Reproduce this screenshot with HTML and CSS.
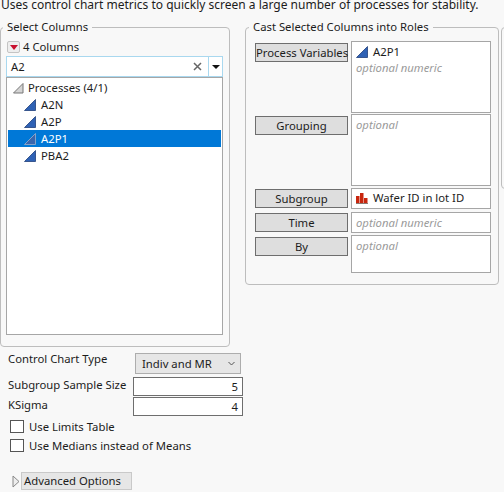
FILE: index.html
```html
<!DOCTYPE html>
<html lang="en">
  <head>
    <meta charset="UTF-8" />
    <title>Process Screening</title>
    <link rel="stylesheet" href="styles.css">
  </head>
  <body>
    <svg class="icon-defs" width="0" height="0" aria-hidden="true">
      <symbol id="continuous" viewBox="0 0 12 12">
        <path d="M11.5 .5V11.5H.5Z" fill="#2f62b5" stroke="#1f3f7a" stroke-width=".8" />
      </symbol>
    </svg>

    <p class="intro">Uses control chart metrics to quickly screen a large number of processes for stability.</p>

    <div class="main-row">
      <div class="left-col">
        <fieldset class="panel select-panel">
          <legend>Select Columns</legend>
          <div class="col-count">
            <span class="menu-btn"><span class="menu-arrow"></span></span>
            <span>4 Columns</span>
          </div>
          <div class="search-box">
            <span class="search-text">A2</span>
            <svg class="clear-x" width="9" height="9" viewBox="0 0 9 9">
              <path d="M1 1L8 8M8 1L1 8" stroke="#666" stroke-width="1.5" />
            </svg>
            <span class="search-drop"><span class="drop-arrow"></span></span>
          </div>
          <ul class="col-list">
            <li class="group-row">
              <svg class="tri" width="12" height="12" viewBox="0 0 12 12">
                <path d="M11 1.5V11H1.5Z" fill="#d4d4d4" stroke="#777" />
              </svg>
              Processes (4/1)
            </li>
            <li class="col-row"><svg class="tri" width="12" height="12"><use href="#continuous" /></svg>A2N</li>
            <li class="col-row"><svg class="tri" width="12" height="12"><use href="#continuous" /></svg>A2P</li>
            <li class="col-row selected">
              <svg class="tri" width="12" height="12" viewBox="0 0 12 12">
                <path d="M11.5 .5V11.5H.5Z" fill="#3a66ad" stroke="#9fb0c8" stroke-width=".8" />
              </svg>
              A2P1
            </li>
            <li class="col-row"><svg class="tri" width="12" height="12"><use href="#continuous" /></svg>PBA2</li>
          </ul>
        </fieldset>

        <div class="options">
          <div class="opt-row type-row">
            <span class="opt-label">Control Chart Type</span>
            <span class="combo">
              Indiv and MR
              <svg width="7" height="5" viewBox="0 0 7 5">
                <path d="M.5 1L3.5 4L6.5 1" fill="none" stroke="#555" />
              </svg>
            </span>
          </div>
          <div class="opt-row num-row">
            <span class="opt-label">Subgroup Sample Size</span>
            <span class="num-box">5</span>
          </div>
          <div class="opt-row num-row">
            <span class="opt-label">KSigma</span>
            <span class="num-box">4</span>
          </div>
          <label class="check-row"><span class="check"></span>Use Limits Table</label>
          <label class="check-row"><span class="check"></span>Use Medians instead of Means</label>
          <div class="advanced">
            <svg width="8" height="13" viewBox="0 0 8 13">
              <path d="M1 1L7 6.5L1 12Z" fill="#eee" stroke="#888" />
            </svg>
            <span class="advanced-btn">Advanced Options</span>
          </div>
        </div>
      </div>

      <fieldset class="panel roles-panel">
        <legend>Cast Selected Columns into Roles</legend>
        <div class="roles-grid">
          <span class="role-btn">Process Variables</span>
          <div class="role-box">
            <div class="role-col"><svg class="tri" width="12" height="12"><use href="#continuous" /></svg>A2P1</div>
            <div class="hint">optional numeric</div>
          </div>

          <span class="role-btn">Grouping</span>
          <div class="role-box"><div class="hint">optional</div></div>

          <span class="role-btn btn-line">Subgroup</span>
          <div class="role-box box-line">
            <div class="role-col">
              <svg class="tri" width="12" height="12" viewBox="0 0 12 12">
                <path d="M0 4H3.5V11H0ZM4 1H7.5V11H4ZM8 6H11.5V11H8Z" fill="#c8260e" />
                <path d="M0 11.5H12" stroke="#8a7a74" />
              </svg>
              Wafer ID in lot ID
            </div>
          </div>

          <span class="role-btn btn-line">Time</span>
          <div class="role-box box-line"><div class="hint">optional numeric</div></div>

          <span class="role-btn">By</span>
          <div class="role-box"><div class="hint">optional</div></div>
        </div>
      </fieldset>

      <fieldset class="panel edge-panel"></fieldset>
    </div>
  </body>
</html>
```

FILE: styles.css
```css
html,
body {
  margin: 0;
  height: 492px;
  overflow: hidden;
}

body {
  background: #f8f8f8;
  color: #1c1c1c;
  font-family: "Noto Sans", "Liberation Sans", sans-serif;
  font-size: 11.3px;
  line-height: 16px;
}

.icon-defs {
  position: absolute;
}

.intro {
  margin: 0;
  height: 19px;
  padding-left: 1px;
  font-size: 12px;
  line-height: 10px;
  white-space: nowrap;
}

.main-row {
  display: flex;
  align-items: flex-start;
}

.left-col {
  flex: none;
  width: 245px;
}

/* group boxes */
.panel {
  margin: 0;
  padding: 0;
  border: 1px solid #bdbdbd;
  border-radius: 4px;
  min-width: 0;
}

.panel legend {
  padding: 0 4px;
  line-height: 16px;
  white-space: nowrap;
}

.select-panel {
  box-sizing: border-box;
  width: 230px;
  height: 328px;
  padding: 0 5px;
}

.select-panel legend {
  margin-left: -3px;
}

.col-count {
  display: flex;
  align-items: center;
  gap: 3px;
  height: 16px;
  margin-top: 4px;
  padding-left: 1px;
}

.menu-btn {
  display: flex;
  align-items: center;
  justify-content: center;
  box-sizing: border-box;
  width: 13px;
  height: 12px;
  border: 1px solid #c4c4c4;
  border-radius: 2px;
  background: #eee;
}

.menu-arrow {
  border-left: 4px solid transparent;
  border-right: 4px solid transparent;
  border-top: 5px solid #c8102e;
}

.search-box {
  display: flex;
  align-items: center;
  box-sizing: border-box;
  width: 217px;
  height: 21px;
  margin-top: 1px;
  border: 1px solid #a9d8ef;
  background: #fff;
}

.search-text {
  flex: 1;
  padding-left: 4px;
}

.clear-x {
  margin-right: 6px;
}

.search-drop {
  display: flex;
  align-items: center;
  justify-content: center;
  width: 13px;
  height: 100%;
  border-left: 1px solid #a9d8ef;
}

.drop-arrow {
  border-left: 4px solid transparent;
  border-right: 4px solid transparent;
  border-top: 4px solid #111;
}

.col-list {
  box-sizing: border-box;
  width: 217px;
  height: 258px;
  margin: 0;
  padding: 1px 1px;
  list-style: none;
  border: 1px solid #a6a6a6;
  background: #fff;
}

.group-row,
.col-row {
  display: flex;
  align-items: center;
  height: 17px;
}

.group-row {
  padding-left: 4px;
  gap: 4px;
}

.col-row {
  padding-left: 16px;
  gap: 5px;
}

.selected {
  background: #0078d7;
  color: #fff;
}

.tri {
  flex: none;
}

/* options under the column picker */
.options {
  padding-left: 8px;
}

.opt-row {
  display: flex;
  justify-content: space-between;
}

.opt-label {
  white-space: nowrap;
}

.type-row {
  height: 24px;
  margin-top: 6px;
  width: 233px;
}

.type-row .opt-label {
  line-height: 12px;
}

.num-row {
  height: 20px;
  width: 235px;
}

.combo {
  display: flex;
  align-items: center;
  justify-content: space-between;
  box-sizing: border-box;
  width: 106px;
  height: 21px;
  padding: 0 5px 0 6px;
  border: 1px solid #adadad;
  background: #e6e6e6;
}

.num-box {
  box-sizing: border-box;
  width: 110px;
  height: 19px;
  padding-right: 4px;
  border: 1px solid #6e6e6e;
  background: #fff;
  text-align: right;
  line-height: 17px;
}

.check-row {
  display: flex;
  align-items: center;
  gap: 5px;
  height: 19px;
  padding-left: 2px;
}

.check {
  box-sizing: border-box;
  width: 14px;
  height: 13px;
  border: 1px solid #555;
  background: #fff;
}

.advanced {
  display: flex;
  align-items: center;
  gap: 1px;
  margin-top: 17px;
  padding-left: 4px;
}

.advanced-btn {
  box-sizing: border-box;
  width: 111px;
  height: 18px;
  padding-left: 2px;
  border: 1px solid #c9c9c9;
  background: #e6e6e6;
}

/* roles */
.roles-panel {
  flex: none;
  box-sizing: border-box;
  width: 254px;
  height: 266px;
  padding: 0 6px 0 9px;
}

.roles-panel legend {
  margin-left: -6px;
}

.roles-grid {
  display: grid;
  grid-template-columns: 93px 140px;
  grid-template-rows: 73px 74px 24px 23px 38px;
  column-gap: 3px;
  margin-top: 6px;
}

.role-btn {
  box-sizing: border-box;
  height: 19px;
  margin-top: 2px;
  border: 1px solid #6e6e6e;
  background: #dedede;
  text-align: center;
  line-height: 17px;
  white-space: nowrap;
}

.btn-line {
  margin-top: 1px;
}

.role-box {
  box-sizing: border-box;
  height: 72px;
  padding: 2px 4px;
  border: 1px solid #a6a6a6;
  background: #fff;
}

.role-box:last-child {
  height: 38px;
}

.role-box.box-line {
  height: 21px;
  padding: 1px 4px;
}

.role-col {
  display: flex;
  align-items: center;
  gap: 5px;
  height: 16px;
}

.hint {
  color: #9a9a9a;
  font-style: italic;
}

.box-line .hint {
  margin-top: 1px;
}

.edge-panel {
  flex: none;
  width: 20px;
  height: 160px;
  margin-left: 2px;
  margin-top: 8px;
}
```
